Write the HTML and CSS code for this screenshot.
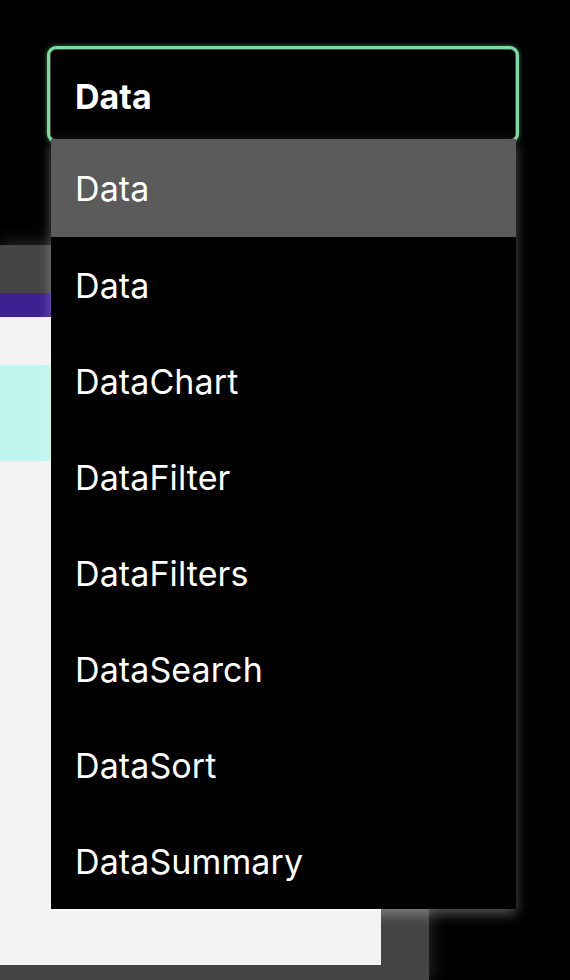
FILE: index.html
```html
<!DOCTYPE html>
<html lang="en">
<head>
<meta charset="utf-8">
<title>Combobox</title>
<link rel="stylesheet" href="styles.css">
</head>
<body>
  <div class="app">
    <div class="panel">
      <div class="panel-bar"></div>
      <div class="panel-accent"></div>
      <div class="panel-body">
        <div class="content">
          <div class="content-gap"></div>
          <div class="content-highlight"></div>
        </div>
      </div>
    </div>
  </div>

  <div class="combobox">
    <div class="combo-input">Data</div>
    <ul class="listbox">
      <li class="option active">Data</li>
      <li class="option">Data</li>
      <li class="option">DataChart</li>
      <li class="option">DataFilter</li>
      <li class="option">DataFilters</li>
      <li class="option">DataSearch</li>
      <li class="option">DataSort</li>
      <li class="option">DataSummary</li>
    </ul>
  </div>
</body>
</html>
```
FILE: styles.css
```css
* { box-sizing: border-box; }

html, body {
  margin: 0;
  padding: 0;
  background: #000;
  height: 980px;
  overflow: hidden;
  font-family: Inter, "Noto Sans", sans-serif;
}

.app {
  padding-top: 245px;
  height: 980px;
}

.panel {
  width: 429px;
  height: 735px;
  background: #454545;
  box-shadow: 0 0 18px rgba(70, 70, 70, 0.75);
  display: flex;
  flex-direction: column;
}

.panel-bar {
  height: 48px;
  background: #454545;
}

.panel-accent {
  height: 24px;
  background: #3e2090;
}

.panel-body {
  flex: 1;
  padding-bottom: 15px;
  display: flex;
}

.content {
  width: 381px;
  background: #f2f2f2;
  display: flex;
  flex-direction: column;
}

.content-gap {
  height: 48px;
}

.content-highlight {
  height: 96px;
  background: #c0f6ee;
}

.combobox {
  position: absolute;
  left: 50px;
  top: 49px;
  width: 466px;
}

.combo-input {
  height: 91px;
  border: 1px solid #4a4a4a;
  border-radius: 6px;
  box-shadow: 0 0 0 3px #80dba2, 0 0 5px 3px rgba(128, 219, 162, 0.55);
  background: #000;
  color: #fff;
  font-size: 34px;
  font-weight: 700;
  display: flex;
  align-items: center;
  padding: 3px 24px 0;
}

.listbox {
  position: absolute;
  left: 1px;
  top: 90px;
  width: 465px;
  margin: 0;
  padding: 0;
  list-style: none;
  background: #000;
  box-shadow: 0 5px 12px rgba(255, 255, 255, 0.32);
}

.option {
  height: 96px;
  display: flex;
  align-items: center;
  padding: 0 24px;
  color: #fff;
  font-size: 34px;
  font-weight: 400;
  letter-spacing: 0.1px;
}

.option.active {
  background: #5b5b5b;
  height: 98px;
}
```
